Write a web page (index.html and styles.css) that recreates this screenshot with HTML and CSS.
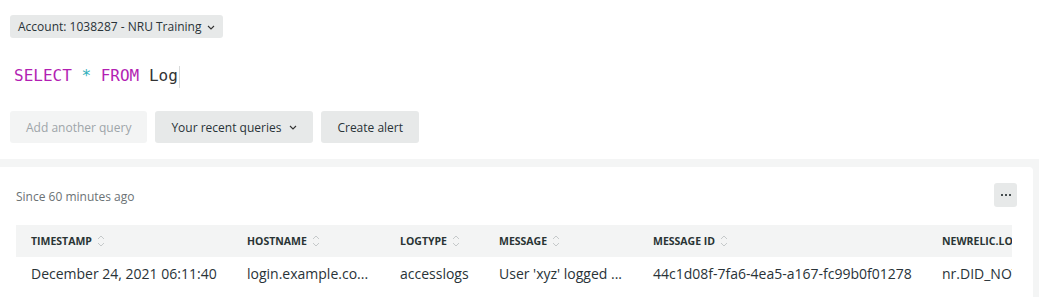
FILE: index.html
```html
<!DOCTYPE html>
<html lang="en">
<head>
  <meta charset="UTF-8" />
  <title>Query builder - Logs</title>
  <link rel="stylesheet" href="styles.css">
</head>
<body>
  <div class="top">
    <button class="account-btn">Account: 1038287 - NRU Training
      <svg class="chev" width="8" height="5" viewBox="0 0 8 5"><path d="M1 1l3 3 3-3" fill="none" stroke="#333" stroke-width="1.1"/></svg>
    </button>

    <div class="query"><span class="kw">SELECT</span> <span class="op">*</span> <span class="kw">FROM</span> Log<span class="cursor"></span></div>

    <div class="actions">
      <button class="btn disabled">Add another query</button>
      <button class="btn">Your recent queries
        <svg class="chev" width="8" height="5" viewBox="0 0 8 5"><path d="M1 1l3 3 3-3" fill="none" stroke="#333" stroke-width="1.1"/></svg>
      </button>
      <button class="btn">Create alert</button>
    </div>
  </div>

  <div class="main">
    <div class="card">
      <div class="card-head">
        <span class="since">Since 60 minutes ago</span>
        <button class="more-btn"><span></span><span></span><span></span></button>
      </div>

      <div class="table-wrap">
        <div class="row head">
          <div class="cell c1">Timestamp <i class="sort"></i></div>
          <div class="cell c2">Hostname <i class="sort"></i></div>
          <div class="cell c3">Logtype <i class="sort"></i></div>
          <div class="cell c4">Message <i class="sort"></i></div>
          <div class="cell c5">Message ID <i class="sort"></i></div>
          <div class="cell c6">Newrelic.logPattern</div>
        </div>
        <div class="row">
          <div class="cell c1">December 24, 2021 06:11:40</div>
          <div class="cell c2">login.example.co...</div>
          <div class="cell c3">accesslogs</div>
          <div class="cell c4">User 'xyz' logged ...</div>
          <div class="cell c5">44c1d08f-7fa6-4ea5-a167-fc99b0f01278</div>
          <div class="cell c6">nr.DID_NOT_MATCH</div>
        </div>
      </div>
    </div>
  </div>
</body>
</html>
```

FILE: styles.css
```css
* {
  box-sizing: border-box;
}
body {
  margin: 0;
  font-family: 'Open Sans', sans-serif;
  color: #293338;
  background: #fff;
}
button {
  font-family: inherit;
  border: none;
  cursor: pointer;
}
.top {
  height: 159px;
  padding: 15px 10px 0;
}
.account-btn {
  display: flex;
  align-items: center;
  gap: 6px;
  height: 23px;
  padding: 0 8px;
  background: #e7e9e9;
  border-radius: 3px;
  font-size: 12px;
  color: #293338;
}
.chev {
  margin-top: 1px;
}
.query {
  font-family: 'DejaVu Sans Mono', monospace;
  font-size: 16px;
  line-height: 24px;
  height: 24px;
  color: #333;
  margin: 26px 0 0 4px;
  white-space: pre;
}
.kw {
  color: #b31fb3;
}
.op {
  color: #2fb0bc;
}
.cursor {
  display: inline-block;
  width: 1px;
  height: 22px;
  background: #d8dada;
  margin-left: 1px;
  vertical-align: middle;
}
.actions {
  display: flex;
  gap: 8px;
  margin-top: 23px;
}
.btn {
  display: flex;
  align-items: center;
  gap: 8px;
  height: 32px;
  padding: 0 16px;
  background: #e7e9e9;
  border-radius: 3px;
  font-size: 12px;
  color: #293338;
}
.btn.disabled {
  background: #f3f4f4;
  color: #9ea5a9;
  cursor: default;
}
.main {
  background: #f4f5f5;
  padding: 8px 6px 0 0;
  height: 138px;
}
.card {
  background: #fff;
  border-radius: 0 4px 0 0;
  height: 100%;
  padding: 16px 21px 0 16px;
}
.card-head {
  display: flex;
  justify-content: space-between;
  align-items: center;
}
.since {
  font-size: 12px;
  color: #6b7275;
  margin-top: 2px;
}
.more-btn {
  width: 23px;
  height: 24px;
  background: #e7e9e9;
  border-radius: 3px;
  display: flex;
  justify-content: center;
  align-items: center;
  gap: 2px;
  padding: 0;
  margin-right: -5px;
}
.more-btn span {
  width: 2px;
  height: 2px;
  background: #464e50;
}
.table-wrap {
  margin-top: 18px;
  overflow: hidden;
}
.row {
  display: flex;
  white-space: nowrap;
}
.row.head {
  background: #f3f4f4;
  height: 32px;
}
.cell {
  flex: none;
  display: flex;
  align-items: center;
  gap: 5px;
  padding: 0 15px;
  font-size: 14px;
  height: 32px;
}
.head .cell {
  font-size: 10.5px;
  font-weight: 700;
  text-transform: uppercase;
  color: #2a3434;
}
.c1 { width: 216px; }
.c2 { width: 153px; }
.c3 { width: 99px; }
.c4 { width: 154px; }
.c5 { width: 289px; }
.c6 { width: 200px; }
.sort {
  display: inline-block;
  width: 8px;
  height: 14px;
  background:
    url("data:image/svg+xml;utf8,<svg xmlns='http://www.w3.org/2000/svg' width='8' height='14' viewBox='0 0 8 14'><path d='M1 5l3-3 3 3M1 9l3 3 3-3' fill='none' stroke='%23c5c9ca' stroke-width='1'/></svg>") no-repeat center;
}
```
